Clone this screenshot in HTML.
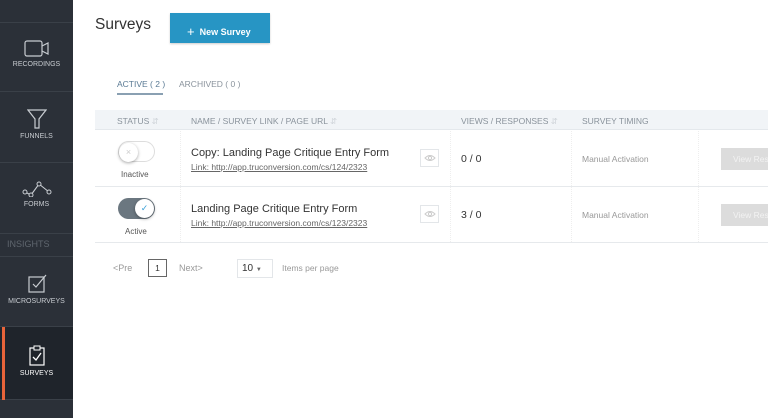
<!DOCTYPE html>
<html><head><style>
*{margin:0;padding:0;box-sizing:border-box}
body{width:768px;height:418px;overflow:hidden;background:#fff;font-family:"Liberation Sans",sans-serif;position:relative}
.sb{position:absolute;left:0;top:0;width:73px;height:418px;background:#2b3038}
.sec{position:absolute;left:0;width:73px;border-bottom:1px solid #3a4048;text-align:center;color:#c8ccd1;font-size:7px}
.sec svg{display:block;margin:0 auto}
.lbl{margin-top:4px}
.abs{position:absolute}
.th{position:absolute;top:110px;left:95px;width:673px;height:20px;background:#f1f4f7;border-bottom:1px solid #e4e8ec;font-size:8.5px;color:#8a939c}
.th span{position:absolute;top:6px}
.th i{font-style:normal;color:#cfd4d9}
.row{position:absolute;left:95px;width:673px;border-bottom:1px solid #e6e9ec;height:56px}
.t{position:absolute;font-size:11px;color:#333}
.lnk{position:absolute;font-size:8.5px;color:#666;text-decoration:underline}
.tog{position:absolute;width:37px;height:21px;border-radius:11px}
.knob{position:absolute;top:1px;width:19px;height:19px;border-radius:50%;background:#fff;box-shadow:0 1px 3px rgba(0,0,0,.35)}
.eye{position:absolute;width:19px;height:18px;border:1px solid #e3e6e9;background:#fff}
.eye svg{position:absolute;left:3px;top:4px}
.vr{position:absolute;left:626px;width:60px;height:22px;background:#dcdcdc;color:#f2f2f2;font-size:8.5px;padding:6px 0 0 12px}
.gray{position:absolute;font-size:8.5px;color:#999}
.dv{position:absolute;top:0;height:55px;border-left:1px dotted #eee}
</style></head><body>
<div class="sb">
 <div class="sec" style="top:0;height:23px">&nbsp;</div>
 <div class="sec" style="top:23px;height:69px;padding-top:17px">
  <svg width="26" height="17" viewBox="0 0 26 17"><rect x="1" y="1" width="17" height="15" rx="2" fill="none" stroke="#c8ccd1" stroke-width="1.2"/><path d="M18 6 L24 3 V14 L18 11" fill="none" stroke="#c8ccd1" stroke-width="1.2"/></svg>
  <div class="lbl">RECORDINGS</div></div>
 <div class="sec" style="top:92px;height:71px;padding-top:17px">
  <svg width="20" height="20" viewBox="0 0 20 20"><path d="M1 1 H19 L12 10 V19 H8 V10 Z" fill="none" stroke="#c8ccd1" stroke-width="1.2"/></svg>
  <div class="lbl">FUNNELS</div></div>
 <div class="sec" style="top:163px;height:71px;padding-top:18px">
  <svg width="30" height="16" viewBox="0 0 30 16"><path d="M3 11 L9 14 L17 3 L27 11" fill="none" stroke="#c8ccd1" stroke-width="1.1"/><circle cx="3" cy="11" r="2" fill="#2b3038" stroke="#c8ccd1"/><circle cx="9" cy="14" r="2" fill="#2b3038" stroke="#c8ccd1"/><circle cx="17" cy="3" r="2" fill="#2b3038" stroke="#c8ccd1"/><circle cx="27" cy="11" r="2" fill="#2b3038" stroke="#c8ccd1"/></svg>
  <div class="lbl">FORMS</div></div>
 <div class="abs" style="top:239px;left:7px;color:#5f666e;font-size:9px">INSIGHTS</div>
 <div class="sec" style="top:256px;height:71px;border-top:1px solid #3a4048;padding-top:17px">
  <svg width="20" height="20" viewBox="0 0 20 20"><rect x="2" y="3" width="15" height="15" fill="none" stroke="#c8ccd1" stroke-width="1.2"/><path d="M6 10 L9 13 L19 1" fill="none" stroke="#c8ccd1" stroke-width="1.2"/></svg>
  <div class="lbl">MICROSURVEYS</div></div>
 <div class="sec" style="top:327px;height:73px;background:#1f242b;padding-top:18px;color:#fff">
  <svg width="16" height="21" viewBox="0 0 16 21"><rect x="1" y="3" width="14" height="17" fill="none" stroke="#fff" stroke-width="1.2"/><rect x="5" y="1" width="6" height="4" fill="#1f242b" stroke="#fff"/><path d="M4 12 L7 15 L12 8" fill="none" stroke="#fff" stroke-width="1.3"/></svg>
  <div class="lbl">SURVEYS</div></div>
 <div class="abs" style="left:2px;top:327px;width:3px;height:73px;background:#e8643a"></div>
</div>

<div class="abs" style="left:95px;top:16px;font-size:15.5px;color:#333">Surveys</div>
<div class="abs" style="left:170px;top:13px;width:100px;height:30px;background:#2795c4;color:#fff;font-size:9px;font-weight:bold;padding-top:10px;padding-left:17px;box-shadow:0 1px 2px rgba(0,0,0,.2)"><span style="font-size:13px;font-weight:normal;position:relative;top:1px">+</span>&nbsp; New Survey</div>

<div class="abs" style="left:117px;top:79px;font-size:8.5px;color:#5a7a94">ACTIVE ( 2 )</div>
<div class="abs" style="left:117px;top:93px;width:46px;height:2px;background:#8aa0b2"></div>
<div class="abs" style="left:179px;top:79px;font-size:8.5px;color:#8a939c">ARCHIVED ( 0 )</div>

<div class="th"><span style="left:22px">STATUS <i>&#8693;</i></span><span style="left:96px">NAME / SURVEY LINK / PAGE URL <i>&#8693;</i></span><span style="left:366px">VIEWS / RESPONSES <i>&#8693;</i></span><span style="left:487px">SURVEY TIMING</span></div>

<div class="row" style="top:131px">
 <div class="dv" style="left:85px"></div><div class="dv" style="left:355px"></div><div class="dv" style="left:476px"></div><div class="dv" style="left:603px"></div>
 <div class="tog" style="left:23px;top:10px;border:1px solid #ddd;background:#fff"><div class="knob" style="left:0;font-size:9px;color:#ccc;text-align:center;line-height:19px">×</div></div>
 <div class="abs" style="left:26px;top:39px;font-size:8px;color:#555">Inactive</div>
 <div class="t" style="left:96px;top:16px">Copy: Landing Page Critique Entry Form</div>
 <div class="lnk" style="left:96px;top:31px">Link: http://app.truconversion.com/cs/124/2323</div>
 <div class="eye" style="left:325px;top:18px"><svg width="12" height="8" viewBox="0 0 12 8"><path d="M1 4 Q6 -1 11 4 Q6 9 1 4Z" fill="none" stroke="#ccc"/><circle cx="6" cy="4" r="1.6" fill="none" stroke="#ccc"/></svg></div>
 <div class="t" style="left:366px;top:22px;font-size:10.5px">0 / 0</div>
 <div class="gray" style="left:487px;top:23px">Manual Activation</div>
 <div class="vr" style="top:17px">View Res</div>
</div>
<div class="row" style="top:187px">
 <div class="dv" style="left:85px"></div><div class="dv" style="left:355px"></div><div class="dv" style="left:476px"></div><div class="dv" style="left:603px"></div>
 <div class="tog" style="left:23px;top:11px;background:#6b7780"><div class="knob" style="left:17px;color:#3aa0d8;font-size:9px;text-align:center;line-height:19px">✓</div></div>
 <div class="abs" style="left:30px;top:40px;font-size:8px;color:#555">Active</div>
 <div class="t" style="left:96px;top:16px">Landing Page Critique Entry Form</div>
 <div class="lnk" style="left:96px;top:31px">Link: http://app.truconversion.com/cs/123/2323</div>
 <div class="eye" style="left:325px;top:18px"><svg width="12" height="8" viewBox="0 0 12 8"><path d="M1 4 Q6 -1 11 4 Q6 9 1 4Z" fill="none" stroke="#ccc"/><circle cx="6" cy="4" r="1.6" fill="none" stroke="#ccc"/></svg></div>
 <div class="t" style="left:366px;top:22px;font-size:10.5px">3 / 0</div>
 <div class="gray" style="left:487px;top:23px">Manual Activation</div>
 <div class="vr" style="top:17px">View Res</div>
</div>

<div class="gray" style="left:113px;top:263px;font-size:9px">&lt;Pre</div>
<div class="abs" style="left:148px;top:259px;width:19px;height:18px;border:1px solid #666;font-size:8.5px;text-align:center;padding-top:3px;color:#333">1</div>
<div class="gray" style="left:179px;top:263px;font-size:9px">Next&gt;</div>
<div class="abs" style="left:237px;top:259px;width:36px;height:19px;border:1px solid #e3e6e9;font-size:10px;color:#333;padding:3px 0 0 4px">10 <span style="font-size:6px;color:#666">▼</span></div>
<div class="gray" style="left:282px;top:263px">Items per page</div>
</body></html>
